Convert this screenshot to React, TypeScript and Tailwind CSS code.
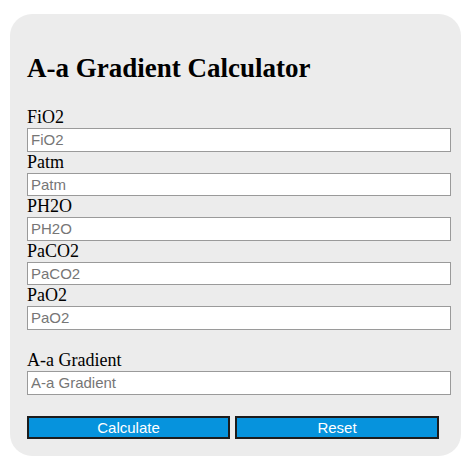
import React from "react";

const fields = ["FiO2", "Patm", "PH2O", "PaCO2", "PaO2"];

function Field({ label }: { label: string }) {
  return (
    <div className="flex flex-col">
      <label className="block text-[18px] leading-[21px] text-black h-[21px]" style={{ fontFamily: '"Liberation Serif", serif' }}>
        {label}
      </label>
      <input
        type="text"
        placeholder={label}
        className="block w-[424px] h-[23.5px] bg-white border-[1.5px] border-[#9a9a9a] px-[3px] text-[15px] text-black placeholder:text-[#767676] outline-none"
        style={{ fontFamily: '"Liberation Sans", Arial, sans-serif' }}
      />
    </div>
  );
}

export default function App() {
  return (
    <div className="w-[474px] h-[462px] bg-white pt-[14px] pl-[10px]">
      <div className="w-[451px] h-[442px] bg-[#ececec] rounded-[22px] pt-[39px] pl-[17px]">
        <h2
          className="text-[27px] leading-[31px] font-bold text-black"
          style={{ fontFamily: '"Liberation Serif", serif' }}
        >
          A-a Gradient Calculator
        </h2>
        <div className="mt-[23px] flex flex-col">
          {fields.map((f) => (
            <Field key={f} label={f} />
          ))}
        </div>
        <div className="mt-[20.5px]">
          <Field label="A-a Gradient" />
        </div>
        <div className="mt-[21.5px] flex gap-[5px]">
          <button
            className="w-[203px] h-[23px] bg-[#0693dd] border-2 border-[#1c1c1c] text-white text-[15px] leading-[19px]"
            style={{ fontFamily: '"Liberation Sans", Arial, sans-serif' }}
          >
            Calculate
          </button>
          <button
            className="w-[204px] h-[23px] bg-[#0693dd] border-2 border-[#1c1c1c] text-white text-[15px] leading-[19px]"
            style={{ fontFamily: '"Liberation Sans", Arial, sans-serif' }}
          >
            Reset
          </button>
        </div>
      </div>
    </div>
  );
}
